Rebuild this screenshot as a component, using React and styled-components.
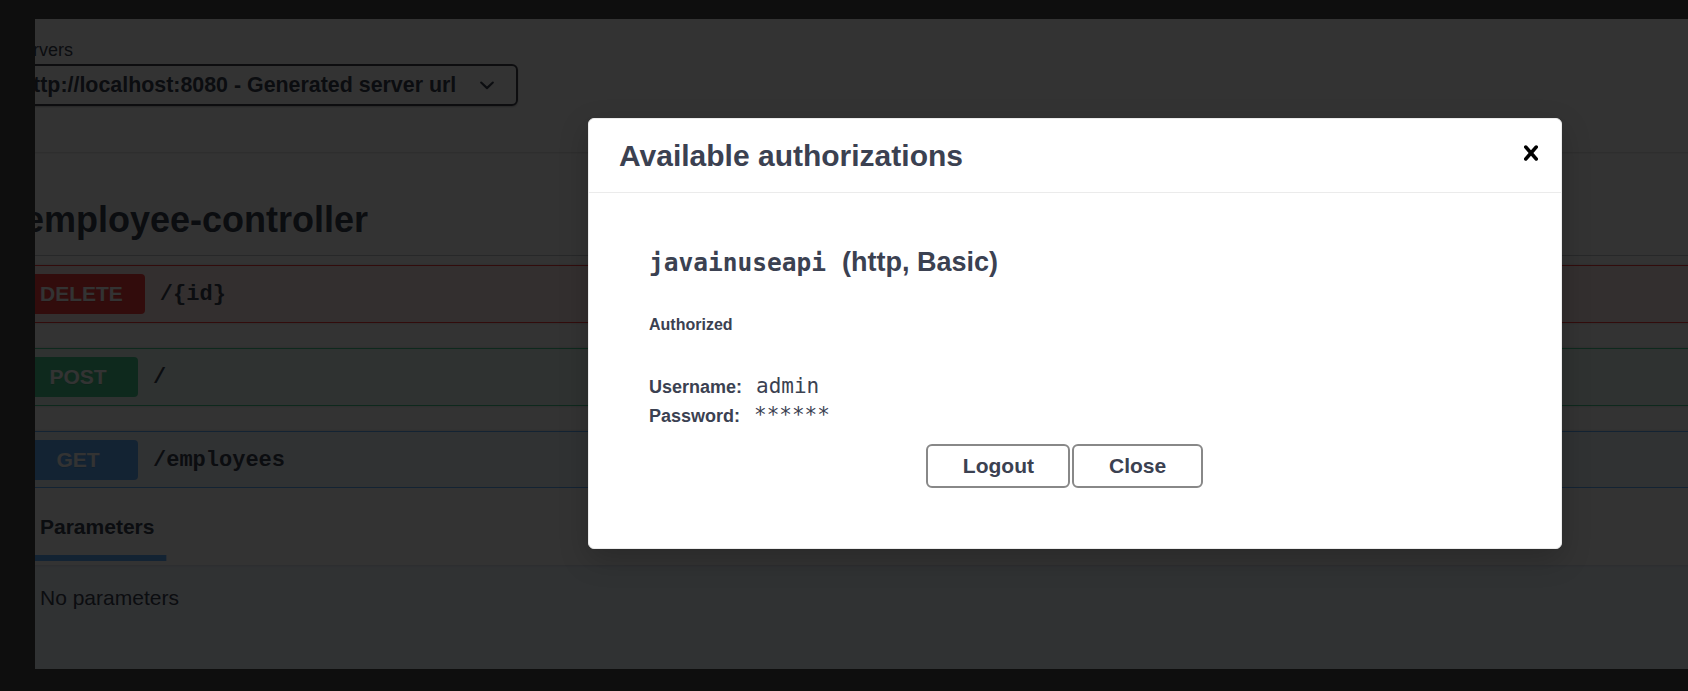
import React from "react";
import styled, { createGlobalStyle, css } from "styled-components";

const Global = createGlobalStyle`
  html, body { margin: 0; padding: 0; background: #0e0e0e; }
  * { box-sizing: border-box; }
`;

const Frame = styled.div`
  height: 691px;
  padding: 19px 0 0 35px;
  overflow: hidden;
  font-family: "Liberation Sans", Arial, sans-serif;
`;

const Viewport = styled.div`
  position: relative;
  height: 650px;
  background: #ffffff;
  overflow: hidden;
  color: #3b4151;
`;

const Page = styled.div`
  width: 1800px;
  margin-left: -26px;
`;

const SchemeContainer = styled.div`
  padding: 21px 0 46px 2px;
  background: #ffffff;
  box-shadow: 0 1px 2px 0 rgba(0, 0, 0, 0.15);
`;

const ServersLabel = styled.div`
  font-size: 18px;
  line-height: 21px;
  color: #3b4151;
  margin-bottom: 3px;
`;

const Select = styled.div`
  display: inline-flex;
  align-items: center;
  gap: 16px;
  margin-left: -8px;
  padding: 8px 14px 8px 15px;
  border: 2px solid #41444e;
  border-radius: 6px;
  box-shadow: 0 1px 2px 0 rgba(0, 0, 0, 0.25);
  font-size: 21.4px;
  font-weight: 700;
  line-height: 22px;
  color: #3b4151;
  svg { margin: -4px 0; }
`;

const TagHeading = styled.h3`
  margin: 33px 0 9px;
  padding: 15px 30px 15px 15px;
  font-size: 36px;
  line-height: 40px;
  font-weight: 700;
  color: #3b4151;
  border-bottom: 1px solid rgba(59, 65, 81, 0.3);
`;

const methods = {
  delete: { color: "#f93e3e", tint: "rgba(249, 62, 62, 0.1)" },
  post: { color: "#49cc90", tint: "rgba(73, 204, 144, 0.1)" },
  get: { color: "#61affe", tint: "rgba(97, 175, 254, 0.1)" },
};

const OpBlock = styled.div`
  margin-bottom: 25px;
  border: 1px solid ${(p) => methods[p.$m].color};
  border-radius: 6px;
  background: ${(p) => methods[p.$m].tint};
  box-shadow: 0 0 3px rgba(0, 0, 0, 0.19);
`;

const Summary = styled.div`
  display: flex;
  align-items: center;
  padding: 8px;
  ${(p) =>
    p.$open &&
    css`
      border-bottom: 1px solid ${methods[p.$m].color};
      padding-bottom: 7px;
    `}
`;

const Method = styled.span`
  min-width: 120px;
  padding: 9px 22px;
  border-radius: 4px;
  background: ${(p) => methods[p.$m].color};
  color: #ffffff;
  text-shadow: 0 1px 0 rgba(0, 0, 0, 0.1);
  font-size: 21px;
  line-height: 22px;
  font-weight: 700;
  text-align: center;
`;

const Path = styled.span`
  margin-left: 15px;
  font-family: "Liberation Mono", "Courier New", monospace;
  font-weight: 700;
  font-size: 22px;
  color: #3b4151;
`;

const SectionHeader = styled.div`
  display: flex;
  align-items: center;
  height: 77px;
  padding: 0 30px;
  background: rgba(255, 255, 255, 0.8);
  box-shadow: 0 1px 2px rgba(0, 0, 0, 0.1);
`;

const TabTitle = styled.span`
  position: relative;
  font-size: 21px;
  line-height: 24px;
  font-weight: 700;
  color: #3b4151;
  &::after {
    content: "";
    position: absolute;
    left: 50%;
    bottom: -22px;
    width: 120%;
    height: 6px;
    transform: translateX(-50%);
    background: ${(p) => methods[p.$m].color};
  }
`;

const SectionBody = styled.div`
  padding: 21px 30px 120px;
  font-size: 21px;
  line-height: 24px;
  color: #3b4151;
`;

/* ---------- dialog ---------- */

const Backdrop = styled.div`
  position: absolute;
  inset: 0;
  background: rgba(0, 0, 0, 0.8);
`;

const Modal = styled.div`
  position: absolute;
  left: 553px;
  top: 99px;
  width: 974px;
  background: #ffffff;
  border: 1px solid #ebebeb;
  border-radius: 6px;
  box-shadow: 0 10px 30px rgba(0, 0, 0, 0.2);
  color: #3b4151;
`;

const ModalHeader = styled.div`
  display: flex;
  align-items: center;
  padding: 18px 0;
  border-bottom: 1px solid #ebebeb;
`;

const ModalTitle = styled.h3`
  flex: 1;
  margin: 0;
  padding: 0 30px;
  font-size: 30px;
  line-height: 37px;
  font-weight: 700;
  color: #3b4151;
`;

const CloseButton = styled.button`
  display: flex;
  margin-top: -6px;
  padding: 0 15px;
  border: none;
  background: none;
  cursor: pointer;
`;

const ModalContent = styled.div`
  padding: 30px;
`;

const AuthContainer = styled.div`
  padding: 15px 30px;
`;

const SchemeTitle = styled.h4`
  margin: 7.5px 0 22.5px;
  font-size: 27px;
  line-height: 33px;
  font-weight: 700;
  color: #3b4151;
  code {
    font-family: "DejaVu Sans Mono", Consolas, monospace;
    font-size: 24.5px;
    font-weight: 700;
    margin-right: 16px;
  }
`;

const Status = styled.h6`
  margin: 36px 0 37px;
  font-size: 16px;
  line-height: 20px;
  font-weight: 700;
  color: #3b4151;
`;

const CredRow = styled.div`
  display: flex;
  align-items: baseline;
  line-height: 28px;
`;

const CredLabel = styled.label`
  font-size: 18px;
  font-weight: 700;
  color: #3b4151;
`;

const CredValue = styled.code`
  margin-left: 14px;
  font-family: "DejaVu Sans Mono", Consolas, monospace;
  font-size: 21px;
  color: #3b4151;
`;

const ButtonRow = styled.div`
  display: flex;
  justify-content: center;
  gap: 2px;
  padding: 14px 0 15px;
`;

const Button = styled.button`
  padding: 7.5px 34.5px;
  border: 2px solid #888888;
  border-radius: 6px;
  background: transparent;
  font-family: "Liberation Sans", Arial, sans-serif;
  font-size: 21px;
  line-height: 25px;
  font-weight: 700;
  color: #3b4151;
  cursor: pointer;
  margin-right: ${(p) => (p.$done ? "21px" : "0")};
`;

const Chevron = () => (
  <svg width="30" height="30" viewBox="0 0 20 20" fill="#3b4151">
    <path d="M13.418 7.859a.695.695 0 0 1 .978 0 .68.68 0 0 1 0 .969l-3.908 3.83a.697.697 0 0 1-.979 0l-3.908-3.83a.68.68 0 0 1 0-.969.695.695 0 0 1 .978 0L10 11l3.418-3.141z" />
  </svg>
);

const CloseIcon = () => (
  <svg width="30" height="30" viewBox="0 0 20 20" fill="#000">
    <path d="M14.348 14.849c-.469.469-1.229.469-1.697 0L10 11.819l-2.651 3.029c-.469.469-1.229.469-1.697 0-.469-.469-.469-1.229 0-1.697l2.758-3.15-2.759-3.152c-.469-.469-.469-1.228 0-1.697.469-.469 1.228-.469 1.697 0L10 8.183l2.651-3.031c.469-.469 1.228-.469 1.697 0 .469.469.469 1.229 0 1.697l-2.758 3.152 2.758 3.150c.469.469.469 1.229 0 1.698z" />
  </svg>
);

const ops = [
  { m: "delete", label: "DELETE", path: "/{id}" },
  { m: "post", label: "POST", path: "/" },
];

export default function App() {
  return (
    <>
      <Global />
      <Frame>
        <Viewport>
          <Page>
            <SchemeContainer>
              <ServersLabel>Servers</ServersLabel>
              <Select>
                <span>http://localhost:8080 - Generated server url</span>
                <Chevron />
              </Select>
            </SchemeContainer>
            <TagHeading>employee-controller</TagHeading>
            {ops.map((o) => (
              <OpBlock key={o.m} $m={o.m}>
                <Summary $m={o.m}>
                  <Method $m={o.m}>{o.label}</Method>
                  <Path>{o.path}</Path>
                </Summary>
              </OpBlock>
            ))}
            <OpBlock $m="get">
              <Summary $m="get" $open>
                <Method $m="get">GET</Method>
                <Path>/employees</Path>
              </Summary>
              <SectionHeader>
                <TabTitle $m="get">Parameters</TabTitle>
              </SectionHeader>
              <SectionBody>No parameters</SectionBody>
            </OpBlock>
          </Page>

          <Backdrop />

          <Modal>
            <ModalHeader>
              <ModalTitle>Available authorizations</ModalTitle>
              <CloseButton aria-label="Close">
                <CloseIcon />
              </CloseButton>
            </ModalHeader>
            <ModalContent>
              <AuthContainer>
                <SchemeTitle>
                  <code>javainuseapi</code>(http, Basic)
                </SchemeTitle>
                <Status>Authorized</Status>
                <CredRow>
                  <CredLabel>Username:</CredLabel>
                  <CredValue>admin</CredValue>
                </CredRow>
                <CredRow>
                  <CredLabel>Password:</CredLabel>
                  <CredValue>******</CredValue>
                </CredRow>
                <ButtonRow>
                  <Button>Logout</Button>
                  <Button $done>Close</Button>
                </ButtonRow>
              </AuthContainer>
            </ModalContent>
          </Modal>
        </Viewport>
      </Frame>
    </>
  );
}
